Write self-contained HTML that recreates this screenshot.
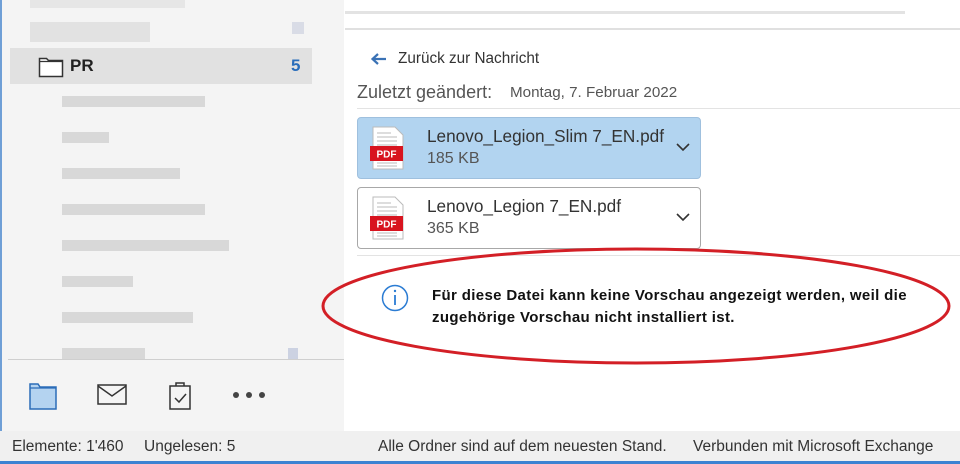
<!DOCTYPE html>
<html><head><meta charset="utf-8"><style>
*{margin:0;padding:0;box-sizing:border-box}
body{width:960px;height:464px;overflow:hidden;position:relative;font-family:"Liberation Sans",sans-serif;background:#fff;color:#222}
.a{position:absolute;white-space:nowrap}
.bl{position:absolute;background:#d8d8d8}
</style></head><body>
<div class="a" style="left:0;top:0;width:344px;height:432px;background:#f4f4f4;border-left:2px solid #6f9fd6"></div>
<div class="a" style="left:10px;top:48px;width:302px;height:36px;background:#e1e1e1"></div>
<div class="bl" style="left:30px;top:22px;width:120px;height:20px;background:#e2e2e2"></div>
<div class="bl" style="left:30px;top:0;width:155px;height:8px;background:#e6e6e6"></div>
<div class="bl" style="left:292px;top:22px;width:12px;height:12px;background:#d9dce6"></div>
<svg class="a" style="left:38px;top:54px" width="26" height="24"><path d="M1.5 4.5h7l2 2h14v16h-23z" fill="#fff" stroke="#333" stroke-width="1.5"/><path d="M1.5 7.5h23" stroke="#333" stroke-width="1.2"/></svg>
<div class="a" style="left:70px;top:56px;font-weight:bold;font-size:17px">PR</div>
<div class="a" style="left:291px;top:56px;font-weight:bold;font-size:17px;color:#2a6ebb">5</div>
<div class="bl" style="left:62px;top:96px;width:143px;height:11px"></div>
<div class="bl" style="left:62px;top:132px;width:47px;height:11px"></div>
<div class="bl" style="left:62px;top:168px;width:118px;height:11px"></div>
<div class="bl" style="left:62px;top:204px;width:143px;height:11px"></div>
<div class="bl" style="left:62px;top:240px;width:167px;height:11px"></div>
<div class="bl" style="left:62px;top:276px;width:71px;height:11px"></div>
<div class="bl" style="left:62px;top:312px;width:131px;height:11px"></div>
<div class="bl" style="left:62px;top:348px;width:83px;height:11px"></div>
<div class="bl" style="left:288px;top:348px;width:10px;height:11px;background:#ccd2e2"></div>
<div class="a" style="left:8px;top:359px;width:336px;height:1px;background:#cfcfcf"></div>
<svg class="a" style="left:28px;top:382px" width="32" height="28"><path d="M2 2h8l2 3h16v22h-26z" fill="#b4d3f0" stroke="#2b6cb8" stroke-width="1.5"/><path d="M2 6h26" stroke="#2b6cb8" stroke-width="1.2"/></svg>
<svg class="a" style="left:97px;top:384px" width="30" height="22"><rect x="1" y="1" width="28" height="19" fill="none" stroke="#333" stroke-width="1.5"/><path d="M1 2l14 10 14-10" fill="none" stroke="#333" stroke-width="1.5"/></svg>
<svg class="a" style="left:168px;top:381px" width="24" height="30"><rect x="2" y="5" width="20" height="23" fill="none" stroke="#333" stroke-width="1.5"/><path d="M8 5V2h8v3" fill="none" stroke="#333" stroke-width="1.5"/><path d="M7 17l4 4 7-8" fill="none" stroke="#333" stroke-width="1.5"/></svg>
<div class="a" style="left:233px;top:392px;width:6px;height:6px;border-radius:3px;background:#444;box-shadow:13px 0 #444,26px 0 #444"></div>
<div class="a" style="left:345px;top:11px;width:560px;height:3px;background:#e3e3e3"></div>
<div class="a" style="left:345px;top:28px;width:615px;height:2px;background:#e0e0e0"></div>
<svg class="a" style="left:370px;top:52px" width="18" height="14"><path d="M16 7H3M8 2L2.5 7 8 12" fill="none" stroke="#3a72b5" stroke-width="2.2"/></svg>
<div class="a" style="left:398px;top:50px;font-size:15.3px;color:#333">Zurück zur Nachricht</div>
<div class="a" style="left:357px;top:82px;font-size:18px;color:#555">Zuletzt geändert:</div>
<div class="a" style="left:510px;top:84px;font-size:15.2px;color:#555">Montag, 7. Februar 2022</div>
<div class="a" style="left:357px;top:108px;width:603px;height:1px;background:#e3e3e3"></div>
<div class="a" style="left:357px;top:117px;width:344px;height:62px;background:#b2d4f0;border:1px solid #9fc0de;border-radius:4px"></div>
<div class="a" style="left:357px;top:187px;width:344px;height:62px;background:#fff;border:1px solid #a8a8a8;border-radius:4px"></div>
<svg class="a" style="left:370px;top:126px" width="36" height="44"><path d="M3 1h22l8 8v34H3z" fill="#fff" stroke="#bbb"/><path d="M7 7h14M7 11h20M7 15h20M7 19h20M7 37h20M7 40h20" stroke="#bbb"/><rect x="0" y="20" width="33" height="15" fill="#d8141f"/><text x="16.5" y="31.5" font-family="Liberation Sans" font-weight="bold" font-size="10" fill="#fff" text-anchor="middle">PDF</text></svg>
<svg class="a" style="left:370px;top:196px" width="36" height="44"><path d="M3 1h22l8 8v34H3z" fill="#fff" stroke="#bbb"/><path d="M7 7h14M7 11h20M7 15h20M7 19h20M7 37h20M7 40h20" stroke="#bbb"/><rect x="0" y="20" width="33" height="15" fill="#d8141f"/><text x="16.5" y="31.5" font-family="Liberation Sans" font-weight="bold" font-size="10" fill="#fff" text-anchor="middle">PDF</text></svg>
<div class="a" style="left:427px;top:126px;font-size:17.2px;color:#333">Lenovo_Legion_Slim 7_EN.pdf</div>
<div class="a" style="left:427px;top:150px;font-size:16px;color:#555">185 KB</div>
<div class="a" style="left:427px;top:196px;font-size:17.2px;color:#333">Lenovo_Legion 7_EN.pdf</div>
<div class="a" style="left:427px;top:220px;font-size:16px;color:#555">365 KB</div>
<svg class="a" style="left:675px;top:142px" width="16" height="10"><path d="M2 2l6 6 6-6" fill="none" stroke="#333" stroke-width="1.6"/></svg>
<svg class="a" style="left:675px;top:212px" width="16" height="10"><path d="M2 2l6 6 6-6" fill="none" stroke="#333" stroke-width="1.6"/></svg>
<div class="a" style="left:357px;top:255px;width:603px;height:1px;background:#e3e3e3"></div>
<svg class="a" style="left:0;top:0" width="960" height="464"><ellipse cx="636" cy="306" rx="313" ry="57" fill="none" stroke="#d31f26" stroke-width="3"/><circle cx="395" cy="298" r="12.5" fill="none" stroke="#2b7cd3" stroke-width="1.5"/><path d="M395 295v10" stroke="#2b7cd3" stroke-width="1.8"/><circle cx="395" cy="291" r="1.2" fill="#2b7cd3"/></svg>
<div class="a" style="left:432px;top:285px;font-size:15px;letter-spacing:0.35px;font-weight:bold;line-height:22px;color:#111">Für diese Datei kann keine Vorschau angezeigt werden, weil die<br>zugehörige Vorschau nicht installiert ist.</div>
<div class="a" style="left:0;top:431px;width:960px;height:31px;background:#f0f0f0"></div>
<div class="a" style="left:0;top:461px;width:960px;height:3px;background:#3c82d2"></div>
<div class="a" style="left:12px;top:438px;font-size:15.5px;color:#333">Elemente: 1'460</div>
<div class="a" style="left:144px;top:438px;font-size:15.5px;color:#333">Ungelesen: 5</div>
<div class="a" style="left:378px;top:438px;font-size:15.5px;color:#333">Alle Ordner sind auf dem neuesten Stand.</div>
<div class="a" style="left:693px;top:438px;font-size:15.5px;color:#333">Verbunden mit Microsoft Exchange</div>
</body></html>
